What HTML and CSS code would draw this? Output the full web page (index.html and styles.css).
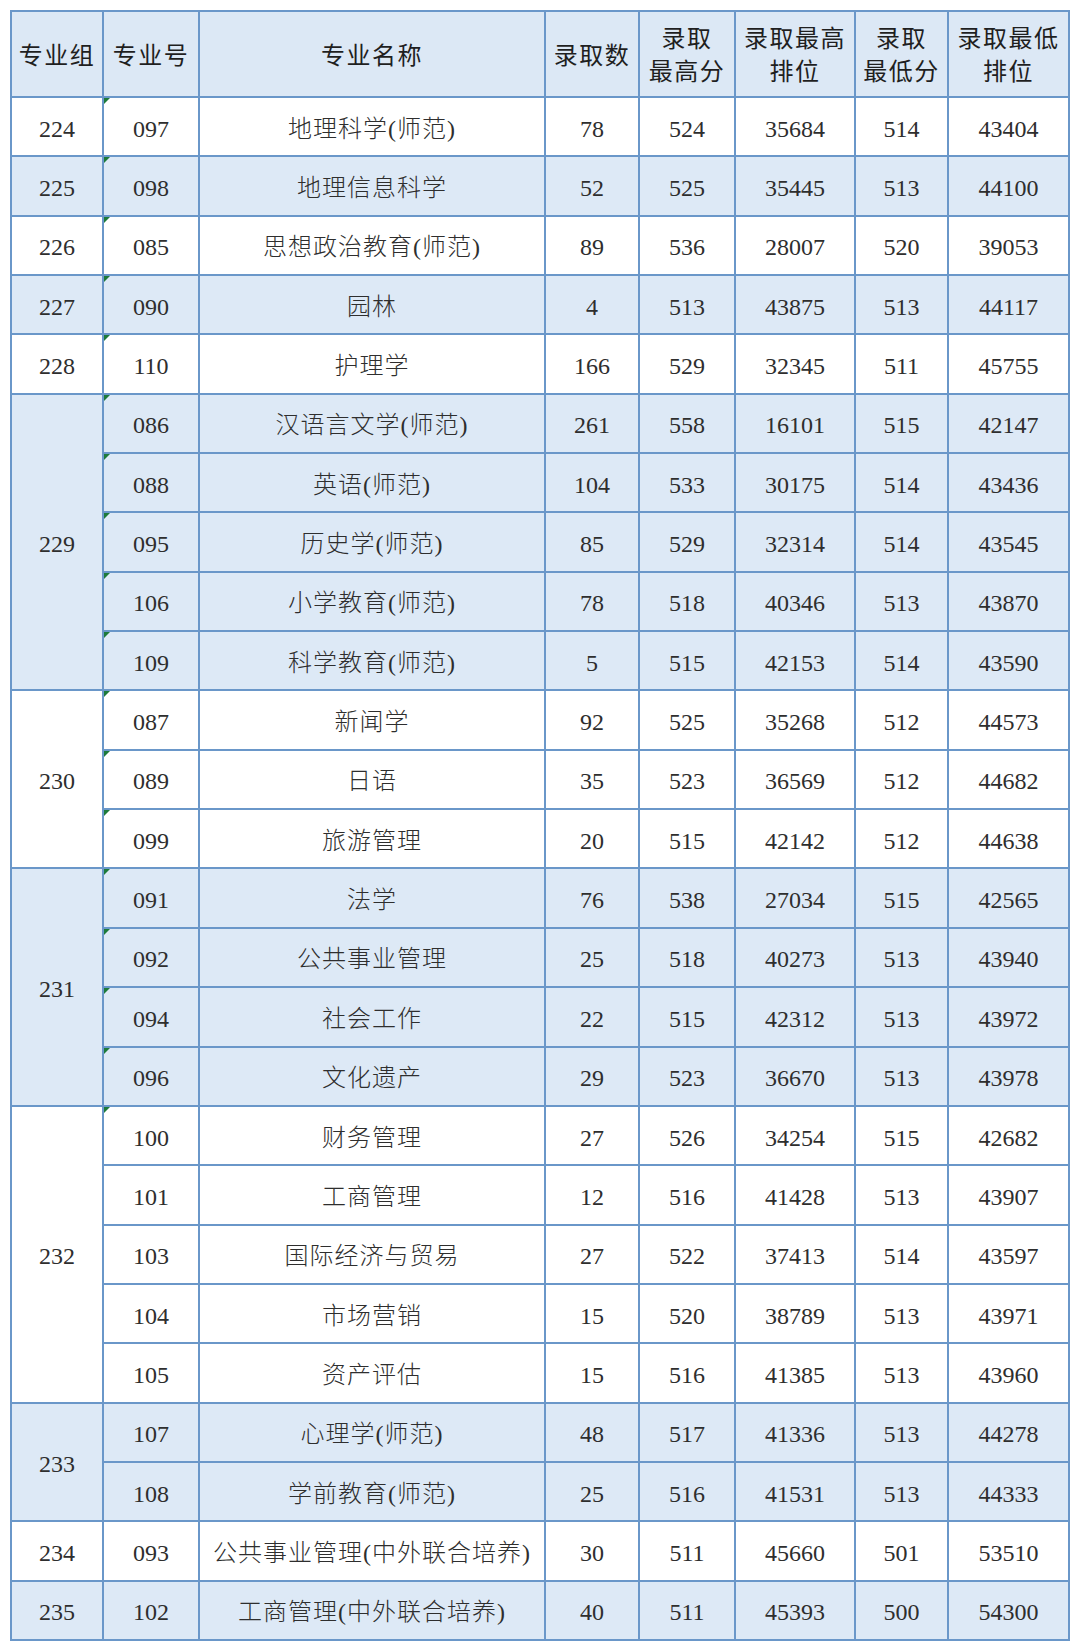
FILE: index.html
```html
<!DOCTYPE html>
<html lang="zh-CN">
<head>
<meta charset="utf-8">
<title>录取分数表</title>
<link rel="stylesheet" href="styles.css">
</head>
<body>
<table class="score-table">
  <colgroup>
    <col class="c-group"><col class="c-code"><col class="c-name"><col class="c-num">
    <col class="c-max"><col class="c-maxrank"><col class="c-min"><col class="c-minrank">
  </colgroup>
  <thead>
    <tr class="head">
      <th>专业组</th><th>专业号</th><th>专业名称</th><th>录取数</th>
      <th>录取<br>最高分</th><th>录取最高<br>排位</th><th>录取<br>最低分</th><th>录取最低<br>排位</th>
    </tr>
  </thead>
  <tbody>
    <tr class="odd"><td>224</td><td class="flag">097</td><td class="name">地理科学(师范)</td><td>78</td><td>524</td><td>35684</td><td>514</td><td>43404</td></tr>
    <tr class="even"><td>225</td><td class="flag">098</td><td class="name">地理信息科学</td><td>52</td><td>525</td><td>35445</td><td>513</td><td>44100</td></tr>
    <tr class="odd"><td>226</td><td class="flag">085</td><td class="name">思想政治教育(师范)</td><td>89</td><td>536</td><td>28007</td><td>520</td><td>39053</td></tr>
    <tr class="even"><td>227</td><td class="flag">090</td><td class="name">园林</td><td>4</td><td>513</td><td>43875</td><td>513</td><td>44117</td></tr>
    <tr class="odd"><td>228</td><td class="flag">110</td><td class="name">护理学</td><td>166</td><td>529</td><td>32345</td><td>511</td><td>45755</td></tr>

    <tr class="even"><td rowspan="5">229</td><td class="flag">086</td><td class="name">汉语言文学(师范)</td><td>261</td><td>558</td><td>16101</td><td>515</td><td>42147</td></tr>
    <tr class="even"><td class="flag">088</td><td class="name">英语(师范)</td><td>104</td><td>533</td><td>30175</td><td>514</td><td>43436</td></tr>
    <tr class="even"><td class="flag">095</td><td class="name">历史学(师范)</td><td>85</td><td>529</td><td>32314</td><td>514</td><td>43545</td></tr>
    <tr class="even"><td class="flag">106</td><td class="name">小学教育(师范)</td><td>78</td><td>518</td><td>40346</td><td>513</td><td>43870</td></tr>
    <tr class="even"><td class="flag">109</td><td class="name">科学教育(师范)</td><td>5</td><td>515</td><td>42153</td><td>514</td><td>43590</td></tr>

    <tr class="odd"><td rowspan="3">230</td><td class="flag">087</td><td class="name">新闻学</td><td>92</td><td>525</td><td>35268</td><td>512</td><td>44573</td></tr>
    <tr class="odd"><td class="flag">089</td><td class="name">日语</td><td>35</td><td>523</td><td>36569</td><td>512</td><td>44682</td></tr>
    <tr class="odd"><td class="flag">099</td><td class="name">旅游管理</td><td>20</td><td>515</td><td>42142</td><td>512</td><td>44638</td></tr>

    <tr class="even"><td rowspan="4">231</td><td class="flag">091</td><td class="name">法学</td><td>76</td><td>538</td><td>27034</td><td>515</td><td>42565</td></tr>
    <tr class="even"><td class="flag">092</td><td class="name">公共事业管理</td><td>25</td><td>518</td><td>40273</td><td>513</td><td>43940</td></tr>
    <tr class="even"><td class="flag">094</td><td class="name">社会工作</td><td>22</td><td>515</td><td>42312</td><td>513</td><td>43972</td></tr>
    <tr class="even"><td class="flag">096</td><td class="name">文化遗产</td><td>29</td><td>523</td><td>36670</td><td>513</td><td>43978</td></tr>

    <tr class="odd"><td rowspan="5">232</td><td class="flag">100</td><td class="name">财务管理</td><td>27</td><td>526</td><td>34254</td><td>515</td><td>42682</td></tr>
    <tr class="odd"><td>101</td><td class="name">工商管理</td><td>12</td><td>516</td><td>41428</td><td>513</td><td>43907</td></tr>
    <tr class="odd"><td>103</td><td class="name">国际经济与贸易</td><td>27</td><td>522</td><td>37413</td><td>514</td><td>43597</td></tr>
    <tr class="odd"><td>104</td><td class="name">市场营销</td><td>15</td><td>520</td><td>38789</td><td>513</td><td>43971</td></tr>
    <tr class="odd"><td>105</td><td class="name">资产评估</td><td>15</td><td>516</td><td>41385</td><td>513</td><td>43960</td></tr>

    <tr class="even"><td rowspan="2">233</td><td>107</td><td class="name">心理学(师范)</td><td>48</td><td>517</td><td>41336</td><td>513</td><td>44278</td></tr>
    <tr class="even"><td>108</td><td class="name">学前教育(师范)</td><td>25</td><td>516</td><td>41531</td><td>513</td><td>44333</td></tr>

    <tr class="odd"><td>234</td><td>093</td><td class="name">公共事业管理(中外联合培养)</td><td>30</td><td>511</td><td>45660</td><td>501</td><td>53510</td></tr>
    <tr class="even"><td>235</td><td>102</td><td class="name">工商管理(中外联合培养)</td><td>40</td><td>511</td><td>45393</td><td>500</td><td>54300</td></tr>
  </tbody>
</table>
</body>
</html>
```
FILE: styles.css
```css
html, body {
  margin: 0;
  padding: 0;
  background: #ffffff;
}

body {
  padding: 10px;
  font-family: "Liberation Serif", "Noto Sans CJK SC", serif;
  color: #2e2e2e;
}

.score-table {
  width: 1058px;
  table-layout: fixed;
  border-collapse: collapse;
  border: 2px solid #6a97c9;
}

.c-group { width: 92px; }
.c-code { width: 96px; }
.c-name { width: 346px; }
.c-num { width: 94px; }
.c-max { width: 96px; }
.c-maxrank { width: 120px; }
.c-min { width: 93px; }
.c-minrank { width: 121px; }

.score-table th,
.score-table td {
  border: 2px solid #6a97c9;
  padding: 0;
  text-align: center;
  vertical-align: middle;
  box-sizing: border-box;
}

.score-table th {
  height: 86px;
  padding-top: 4px;
  background: #dce8f5;
  font-size: 24px;
  font-weight: 400;
  line-height: 33px;
  letter-spacing: 1.5px;
  color: #1f1f1f;
}

.score-table td {
  height: 59.35px;
  font-size: 24px;
  font-weight: 300;
  line-height: 28px;
  padding-top: 4px;
}

.score-table td.name {
  letter-spacing: 1px;
}

.even td {
  background: #dde9f6;
}

.odd td {
  background: #ffffff;
}

.flag {
  position: relative;
}

.flag::before {
  content: "";
  position: absolute;
  top: 0;
  left: 0;
  border-top: 6px solid #1d7a3a;
  border-right: 6px solid transparent;
}
```
